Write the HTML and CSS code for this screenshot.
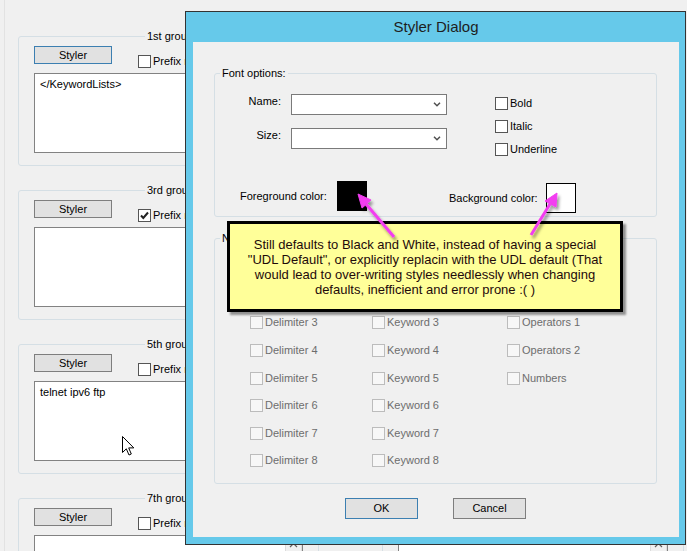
FILE: index.html
```html
<!DOCTYPE html>
<html>
<head>
<meta charset="utf-8">
<title>Styler Dialog</title>
<link rel="stylesheet" href="styles.css">
</head>
<body>
<div class="app">
  <div class="col">
    <div class="group">
      <span class="group-title">1st group</span>
      <div class="group-head">
        <button class="btn-styler is-default">Styler</button>
        <label class="prefix"><span class="cb"></span>Prefix mode</label>
      </div>
      <div class="keywords"><div class="kw-text">&lt;/KeywordLists&gt;</div><div class="vscroll"><span class="vs-up"><svg width="9" height="6" viewBox="0 0 9 6"><path d="M1 5 L4.5 1.5 L8 5" fill="none" stroke="#606060" stroke-width="1.2"/></svg></span></div></div>
    </div>
    <div class="group">
      <span class="group-title">3rd group</span>
      <div class="group-head">
        <button class="btn-styler">Styler</button>
        <label class="prefix"><span class="cb"><svg width="11" height="11" viewBox="0 0 11 11"><path d="M2 5.5 L4.3 8 L9 2.5" fill="none" stroke="#222" stroke-width="2"/></svg></span>Prefix mode</label>
      </div>
      <div class="keywords"><div class="kw-text"></div><div class="vscroll"><span class="vs-up"><svg width="9" height="6" viewBox="0 0 9 6"><path d="M1 5 L4.5 1.5 L8 5" fill="none" stroke="#606060" stroke-width="1.2"/></svg></span></div></div>
    </div>
    <div class="group">
      <span class="group-title">5th group</span>
      <div class="group-head">
        <button class="btn-styler">Styler</button>
        <label class="prefix"><span class="cb"></span>Prefix mode</label>
      </div>
      <div class="keywords"><div class="kw-text">telnet ipv6 ftp</div><div class="vscroll"><span class="vs-up"><svg width="9" height="6" viewBox="0 0 9 6"><path d="M1 5 L4.5 1.5 L8 5" fill="none" stroke="#606060" stroke-width="1.2"/></svg></span></div></div>
    </div>
    <div class="group">
      <span class="group-title">7th group</span>
      <div class="group-head">
        <button class="btn-styler">Styler</button>
        <label class="prefix"><span class="cb"></span>Prefix mode</label>
      </div>
      <div class="keywords"><div class="kw-text"></div><div class="vscroll"><span class="vs-up"><svg width="9" height="6" viewBox="0 0 9 6"><path d="M1 5 L4.5 1.5 L8 5" fill="none" stroke="#606060" stroke-width="1.2"/></svg></span></div></div>
    </div>
  </div>
  <div class="col">
    <div class="group">
      <span class="group-title">2nd group</span>
      <div class="group-head">
        <button class="btn-styler">Styler</button>
        <label class="prefix"><span class="cb"></span>Prefix mode</label>
      </div>
      <div class="keywords"><div class="kw-text"></div><div class="vscroll"><span class="vs-up"><svg width="9" height="6" viewBox="0 0 9 6"><path d="M1 5 L4.5 1.5 L8 5" fill="none" stroke="#606060" stroke-width="1.2"/></svg></span></div></div>
    </div>
    <div class="group">
      <span class="group-title">4th group</span>
      <div class="group-head">
        <button class="btn-styler">Styler</button>
        <label class="prefix"><span class="cb"></span>Prefix mode</label>
      </div>
      <div class="keywords"><div class="kw-text"></div><div class="vscroll"><span class="vs-up"><svg width="9" height="6" viewBox="0 0 9 6"><path d="M1 5 L4.5 1.5 L8 5" fill="none" stroke="#606060" stroke-width="1.2"/></svg></span></div></div>
    </div>
    <div class="group">
      <span class="group-title">6th group</span>
      <div class="group-head">
        <button class="btn-styler">Styler</button>
        <label class="prefix"><span class="cb"></span>Prefix mode</label>
      </div>
      <div class="keywords"><div class="kw-text"></div><div class="vscroll"><span class="vs-up"><svg width="9" height="6" viewBox="0 0 9 6"><path d="M1 5 L4.5 1.5 L8 5" fill="none" stroke="#606060" stroke-width="1.2"/></svg></span></div></div>
    </div>
    <div class="group">
      <span class="group-title">8th group</span>
      <div class="group-head">
        <button class="btn-styler">Styler</button>
        <label class="prefix"><span class="cb"></span>Prefix mode</label>
      </div>
      <div class="keywords"><div class="kw-text"></div><div class="vscroll"><span class="vs-up"><svg width="9" height="6" viewBox="0 0 9 6"><path d="M1 5 L4.5 1.5 L8 5" fill="none" stroke="#606060" stroke-width="1.2"/></svg></span></div></div>
    </div>
  </div>
</div>

<div class="dialog">
  <div class="dialog-title">Styler Dialog</div>
  <div class="dialog-body">
    <div class="fieldset font-group">
      <span class="fieldset-title">Font options:</span>
      <div class="font-top">
        <div class="font-grid">
          <span class="field-label">Name:</span>
          <div class="select"><svg width="8" height="5" viewBox="0 0 8 5"><path d="M1 0.8 L4 3.8 L7 0.8" fill="none" stroke="#505050" stroke-width="1.5"/></svg></div>
          <span class="field-label">Size:</span>
          <div class="select"><svg width="8" height="5" viewBox="0 0 8 5"><path d="M1 0.8 L4 3.8 L7 0.8" fill="none" stroke="#505050" stroke-width="1.5"/></svg></div>
        </div>
        <div class="styles">
          <label class="check"><span class="cb"></span>Bold</label>
          <label class="check"><span class="cb"></span>Italic</label>
          <label class="check"><span class="cb"></span>Underline</label>
        </div>
      </div>
      <div class="colors">
        <div class="color-item"><span class="color-label">Foreground color:</span><span class="swatch swatch-black"></span></div>
        <div class="color-item color-bg"><span class="color-label">Background color:</span><span class="swatch swatch-white"></span></div>
      </div>
    </div>

    <div class="fieldset nesting">
      <span class="fieldset-title">Nesting:</span>
      <div class="nest-grid">
        <label class="check disabled"><span class="cb"></span>Delimiter 1</label>
        <label class="check disabled"><span class="cb"></span>Keyword 1</label>
        <label class="check disabled"><span class="cb"></span>Comment</label>
        <label class="check disabled"><span class="cb"></span>Delimiter 2</label>
        <label class="check disabled"><span class="cb"></span>Keyword 2</label>
        <label class="check disabled"><span class="cb"></span>Comment line</label>
        <label class="check disabled"><span class="cb"></span>Delimiter 3</label>
        <label class="check disabled"><span class="cb"></span>Keyword 3</label>
        <label class="check disabled"><span class="cb"></span>Operators 1</label>
        <label class="check disabled"><span class="cb"></span>Delimiter 4</label>
        <label class="check disabled"><span class="cb"></span>Keyword 4</label>
        <label class="check disabled"><span class="cb"></span>Operators 2</label>
        <label class="check disabled"><span class="cb"></span>Delimiter 5</label>
        <label class="check disabled"><span class="cb"></span>Keyword 5</label>
        <label class="check disabled"><span class="cb"></span>Numbers</label>
        <label class="check disabled"><span class="cb"></span>Delimiter 6</label>
        <label class="check disabled"><span class="cb"></span>Keyword 6</label>
        <span></span>
        <label class="check disabled"><span class="cb"></span>Delimiter 7</label>
        <label class="check disabled"><span class="cb"></span>Keyword 7</label>
        <span></span>
        <label class="check disabled"><span class="cb"></span>Delimiter 8</label>
        <label class="check disabled"><span class="cb"></span>Keyword 8</label>
        <span></span>
      </div>
    </div>

    <div class="dlg-buttons">
      <button class="btn is-default">OK</button>
      <button class="btn">Cancel</button>
    </div>
  </div>
</div>

<div class="callout">
  <p class="callout-text">Still defaults to Black and White, instead of having a special<br>"UDL Default", or explicitly replacin with the UDL default (That<br>would lead to over-writing styles needlessly when changing<br>defaults, inefficient and error prone :( )</p>
</div>

<svg class="arrows" width="687" height="551" viewBox="0 0 687 551">
  <defs>
    <filter id="sh" x="-20%" y="-20%" width="160%" height="160%">
      <feDropShadow dx="2" dy="3" stdDeviation="1.5" flood-color="#000" flood-opacity="0.4"/>
    </filter>
  </defs>
  <g filter="url(#sh)" fill="#f23cf0" stroke="#f23cf0">
    <line x1="394" y1="237" x2="366" y2="204" stroke-width="3"/>
    <polygon points="358,194 371,200 362,208" stroke-width="1"/>
    <line x1="531" y1="235" x2="550" y2="204" stroke-width="3"/>
    <polygon points="557,193 556,207 545,201" stroke-width="1"/>
  </g>
</svg>

<svg class="cursor" width="13" height="21" viewBox="0 0 13 21">
  <path d="M0.5 0.5 L0.5 16.5 L4.3 12.8 L7 19 L9.3 18 L6.7 11.9 L11.8 11.9 Z" fill="#fff" stroke="#000" stroke-width="1" stroke-linejoin="miter"/>
</svg>
</body>
</html>
```

FILE: styles.css
```css
html, body {
  margin: 0;
  padding: 0;
  width: 687px;
  height: 551px;
  overflow: hidden;
}

body {
  position: relative;
  background: #f0f0f0;
  font-family: "Liberation Sans", Arial, sans-serif;
  font-size: 11px;
  color: #000;
}

button {
  font-family: "Liberation Sans", Arial, sans-serif;
  font-size: 11px;
  color: #000;
  padding: 0;
  margin: 0;
}

/* ---------- background window ---------- */
.app {
  margin-left: 4px;
  border-left: 1px solid #e2e2e2;
  height: 551px;
  box-sizing: border-box;
  padding: 36px 0 0 13px;
  display: grid;
  grid-template-columns: 301px 302px;
  column-gap: 63px;
  align-items: start;
}

.col {
  display: flex;
  flex-direction: column;
  gap: 24px;
}

.group {
  position: relative;
  height: 130px;
  box-sizing: border-box;
  border: 1px solid #d5dfe5;
  border-radius: 3px;
  padding: 9px 15px 0;
}

.group-title {
  position: absolute;
  top: -7px;
  left: 126px;
  padding: 0 2px;
  background: #f0f0f0;
  line-height: 13px;
  white-space: nowrap;
}

.group-head {
  display: flex;
  align-items: flex-start;
}

.btn-styler {
  width: 78px;
  height: 18px;
  box-sizing: border-box;
  border: 1px solid #7e7e7e;
  background: #e1e1e1;
  line-height: 16px;
}

.is-default {
  border-color: #3c7fb1;
}

.prefix {
  display: flex;
  align-items: center;
  gap: 2px;
  margin-left: 26px;
  margin-top: 9px;
  line-height: 13px;
  white-space: nowrap;
}

.cb {
  width: 13px;
  height: 13px;
  box-sizing: border-box;
  border: 1px solid #555;
  background: #fff;
  display: flex;
  align-items: center;
  justify-content: center;
  flex: none;
}

.keywords {
  margin-top: 5px;
  height: 80px;
  box-sizing: border-box;
  border: 1px solid #828282;
  background: #fff;
  display: flex;
}

.kw-text {
  flex: 1;
  padding: 4px 5px;
  line-height: 13px;
}

.vscroll {
  width: 17px;
  background: #f0f0f0;
  display: flex;
  flex-direction: column;
}

.vs-up {
  height: 17px;
  display: flex;
  align-items: center;
  justify-content: center;
  border: 1px solid #dcdcdc;
  box-sizing: border-box;
}

/* ---------- dialog ---------- */
.dialog {
  position: absolute;
  left: 185px;
  top: 11px;
  width: 501px;
  height: 534px;
  box-sizing: border-box;
  border: 1px solid #333;
  background: #66c9ea;
  padding: 0 6px 7px 7px;
  display: flex;
  flex-direction: column;
}

.dialog-title {
  height: 30px;
  line-height: 29px;
  text-align: center;
  font-size: 15px;
  color: #1e1e1e;
  flex: none;
}

.dialog-body {
  flex: 1;
  background: #f0f0f0;
  padding: 31px 0 0 21px;
  box-sizing: border-box;
}

.fieldset {
  position: relative;
  width: 443px;
  box-sizing: border-box;
  border: 1px solid #d5dfe5;
  border-radius: 3px;
}

.fieldset-title {
  position: absolute;
  top: -7px;
  left: 5px;
  padding: 0 2px;
  background: #f0f0f0;
  line-height: 13px;
}

.font-group {
  height: 144px;
  padding: 20px 0 0 10px;
}

.font-top {
  display: flex;
  align-items: flex-start;
}

.font-grid {
  display: grid;
  grid-template-columns: 56px 156px;
  column-gap: 10px;
  row-gap: 13px;
}

.field-label {
  text-align: right;
  line-height: 14px;
}

.select {
  height: 21px;
  box-sizing: border-box;
  border: 1px solid #7a7a7a;
  background: #fff;
  display: flex;
  align-items: center;
  justify-content: flex-end;
  padding-right: 5px;
}

.styles {
  margin-left: 48px;
  margin-top: 3px;
  display: flex;
  flex-direction: column;
  gap: 10px;
}

.check {
  display: flex;
  align-items: center;
  gap: 2px;
  line-height: 13px;
  white-space: nowrap;
}

.colors {
  display: flex;
  align-items: flex-start;
  margin-top: 25px;
  padding-left: 15px;
}

.color-item {
  display: flex;
  align-items: center;
}

.color-label {
  width: 97px;
  line-height: 13px;
}

.color-bg {
  margin-left: 82px;
  margin-top: 2px;
}

.swatch {
  width: 30px;
  height: 30px;
  box-sizing: border-box;
  border: 1px solid #000;
}

.swatch-black {
  background: #000;
}

.swatch-white {
  background: #fff;
}

.nesting {
  height: 246px;
  margin-top: 21px;
  padding: 15px 0 0 35px;
}

.nest-grid {
  display: grid;
  grid-template-columns: 122px 135px auto;
  grid-auto-rows: 27.6px;
  align-items: center;
}

.disabled {
  color: #6d6d6d;
}

.disabled .cb {
  border-color: #bcbcbc;
  background: #f7f7f7;
}

.dlg-buttons {
  width: 443px;
  display: flex;
  justify-content: center;
  gap: 35px;
  margin-top: 14px;
}

.btn {
  width: 73px;
  height: 21px;
  box-sizing: border-box;
  border: 1px solid #7e7e7e;
  background: #e1e1e1;
  line-height: 19px;
}

.btn.is-default {
  border-color: #3c7fb1;
}

/* ---------- annotation ---------- */
.callout {
  position: absolute;
  left: 227px;
  top: 221px;
  width: 396px;
  height: 91px;
  box-sizing: border-box;
  border: 3px solid #000;
  background: #ffff99;
  box-shadow: 3px 3px 2px rgba(0, 0, 0, 0.4);
  display: flex;
  align-items: center;
  justify-content: center;
}

.callout-text {
  margin: 0;
  font-size: 13px;
  line-height: 15px;
  text-align: center;
  color: #1e0a0a;
  white-space: nowrap;
}

.arrows {
  position: absolute;
  left: 0;
  top: 0;
  pointer-events: none;
}

.cursor {
  position: absolute;
  left: 122px;
  top: 436px;
  pointer-events: none;
}
```
